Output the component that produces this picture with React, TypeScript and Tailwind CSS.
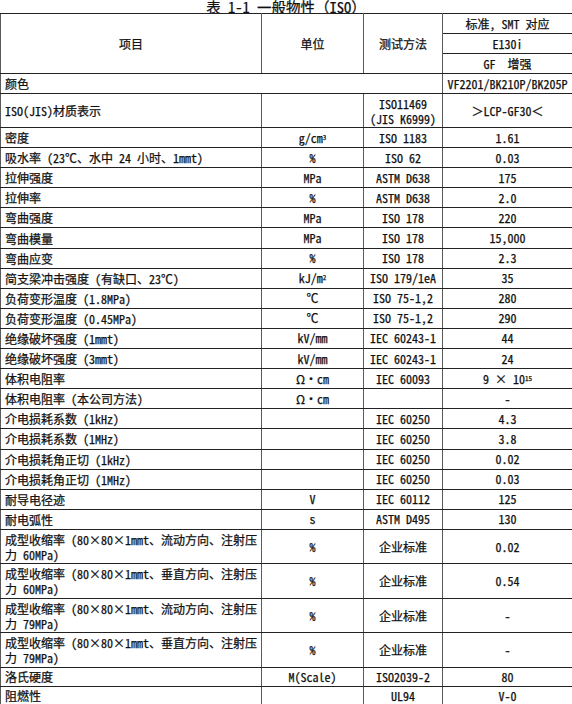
import type { ReactNode } from "react";

type Row = {
  name: ReactNode;
  unit?: ReactNode;
  method?: ReactNode;
  value: ReactNode;
  h: string;
};

const Sup = ({ children }: { children: ReactNode }) => (
  <sup className="relative -top-[3px] align-baseline text-[7px] leading-none">{children}</sup>
);

const S = "h-[20.1px]";
const T = "h-[34.5px]";

const rows: Row[] = [
  { name: "密度", unit: <>g/cm<Sup>3</Sup></>, method: "ISO 1183", value: "1.61", h: S },
  { name: "吸水率 (23℃、水中 24 小时、1mmt)", unit: "%", method: "ISO 62", value: "0.03", h: S },
  { name: "拉伸强度", unit: "MPa", method: "ASTM D638", value: "175", h: S },
  { name: "拉伸率", unit: "%", method: "ASTM D638", value: "2.0", h: S },
  { name: "弯曲强度", unit: "MPa", method: "ISO 178", value: "220", h: S },
  { name: "弯曲模量", unit: "MPa", method: "ISO 178", value: "15,000", h: S },
  { name: "弯曲应变", unit: "%", method: "ISO 178", value: "2.3", h: S },
  { name: "简支梁冲击强度 (有缺口、23℃)", unit: <>kJ/m<Sup>2</Sup></>, method: "ISO 179/1eA", value: "35", h: S },
  { name: "负荷变形温度 (1.8MPa)", unit: "℃", method: "ISO 75-1,2", value: "280", h: S },
  { name: "负荷变形温度 (0.45MPa)", unit: "℃", method: "ISO 75-1,2", value: "290", h: S },
  { name: "绝缘破坏强度 (1mmt)", unit: "kV/mm", method: "IEC 60243-1", value: "44", h: S },
  { name: "绝缘破坏强度 (3mmt)", unit: "kV/mm", method: "IEC 60243-1", value: "24", h: S },
  { name: "体积电阻率", unit: "Ω·cm", method: "IEC 60093", value: <>9 × 10<Sup>15</Sup></>, h: S },
  { name: "体积电阻率 (本公司方法)", unit: "Ω·cm", method: "", value: "-", h: S },
  { name: "介电损耗系数 (1kHz)", method: "IEC 60250", value: "4.3", h: S },
  { name: "介电损耗系数 (1MHz)", method: "IEC 60250", value: "3.8", h: S },
  { name: "介电损耗角正切 (1kHz)", method: "IEC 60250", value: "0.02", h: S },
  { name: "介电损耗角正切 (1MHz)", method: "IEC 60250", value: "0.03", h: S },
  { name: "耐导电径迹", unit: "V", method: "IEC 60112", value: "125", h: S },
  { name: "耐电弧性", unit: "s", method: "ASTM D495", value: "130", h: S },
  { name: <>成型收缩率 (80×80×1mmt、流动方向、注射压<br />力 60MPa)</>, unit: "%", method: "企业标准", value: "0.02", h: T },
  { name: <>成型收缩率 (80×80×1mmt、垂直方向、注射压<br />力 60MPa)</>, unit: "%", method: "企业标准", value: "0.54", h: T },
  { name: <>成型收缩率 (80×80×1mmt、流动方向、注射压<br />力 79MPa)</>, unit: "%", method: "企业标准", value: "-", h: T },
  { name: <>成型收缩率 (80×80×1mmt、垂直方向、注射压<br />力 79MPa)</>, unit: "%", method: "企业标准", value: "-", h: T },
  { name: "洛氏硬度", unit: "M(Scale)", method: "ISO2039-2", value: "80", h: "h-[19px]" },
  { name: "阻燃性", method: "UL94", value: "V-0", h: "h-[18.5px]" },
];

const cell = "border-x border-x-[#5a5a5a] border-y border-y-[#222] p-0";

export default function App() {
  return (
    <div className="w-[572px] h-[704px] overflow-hidden bg-white text-[#111] font-['Noto_Sans_Mono_CJK_SC','Noto_Sans_CJK_SC',monospace] text-[12px] [-webkit-text-stroke:0.25px_#111]">
      <div className="flex h-[13px] items-end justify-center overflow-hidden">
        <span className="text-[14.5px] leading-none translate-y-[1px] whitespace-pre">表 1-1 一般物性（ISO）</span>
      </div>
      <table className="w-[572px] table-fixed border-collapse">
        <colgroup>
          <col className="w-[261px]" />
          <col className="w-[102px]" />
          <col className="w-[79px]" />
          <col className="w-[130px]" />
        </colgroup>
        <tbody>
          <tr className="h-[20px]">
            <td rowSpan={3} className={`${cell} text-center`}>项目</td>
            <td rowSpan={3} className={`${cell} text-center`}>单位</td>
            <td rowSpan={3} className={`${cell} text-center`}>测试方法</td>
            <td className={`${cell} text-center whitespace-pre`}>标准, SMT 对应</td>
          </tr>
          <tr className="h-[20px]">
            <td className={`${cell} text-center`}>E130i</td>
          </tr>
          <tr className="h-[20px]">
            <td className={`${cell} text-center whitespace-pre`}>GF  增强</td>
          </tr>
          <tr className="h-[20px]">
            <td colSpan={3} className={`${cell} pl-[4px]`}>颜色</td>
            <td className={`${cell} text-center`}>VF2201/BK210P/BK205P</td>
          </tr>
          <tr className="h-[34px]">
            <td className={`${cell} pl-[4px]`}>ISO(JIS)材质表示</td>
            <td className={cell}></td>
            <td className={`${cell} text-center leading-[15px]`}>
              ISO11469
              <br />
              (JIS K6999)
            </td>
            <td className={`${cell} text-center`}>＞LCP-GF30＜</td>
          </tr>
          {rows.map((r, i) => (
            <tr key={i} className={r.h}>
              <td className={`${cell} pl-[4px] leading-[15px] whitespace-pre`}>{r.name}</td>
              <td className={`${cell} text-center`}>{r.unit}</td>
              <td className={`${cell} text-center`}>{r.method}</td>
              <td className={`${cell} text-center whitespace-pre`}>{r.value}</td>
            </tr>
          ))}
        </tbody>
      </table>
    </div>
  );
}
